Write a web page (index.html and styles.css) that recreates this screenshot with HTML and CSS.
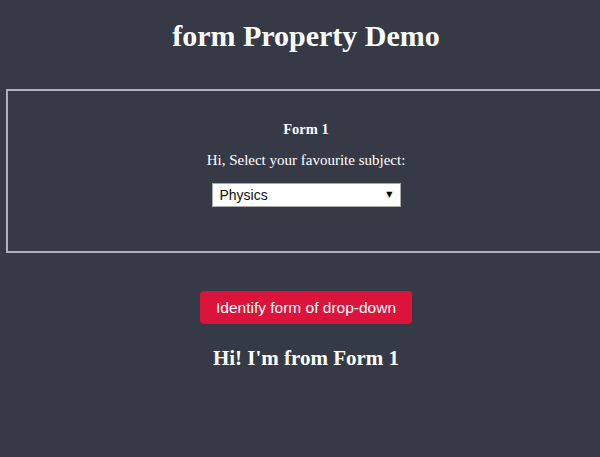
FILE: index.html
```html
<!DOCTYPE html>
<html>

<head>
	<title>form Property Demo</title>
	<meta charset="UTF-8">
	<meta name="viewport" content="width=device-width, initial-scale=1.0">
	<link rel="stylesheet" href="styles.css">
</head>

<body>
	<h1>form Property Demo</h1>
	<form id="form1" class="box">
		<p class="form-title">Form 1</p>
		<label for="subject">Hi, Select your favourite subject:</label>
		<span class="select-wrap">
			<select id="subject">
				<option>Physics</option>
				<option>Chemistry</option>
				<option>Maths</option>
			</select>
		</span>
	</form>
	<button class="btn" onclick="showForm()">Identify form of drop-down</button>
	<h2 id="result">Hi! I'm from Form 1</h2>
	<script>
		function showForm() {
			const sel = document.getElementById('subject');
			document.getElementById('result').textContent = "Hi! I'm from " + sel.form.id.replace('form', 'Form ');
		}
	</script>
</body>

</html>
```

FILE: styles.css
```css
* {
	box-sizing: border-box;
}

html {
	overflow: hidden;
}

body {
	margin: 0;
	padding: 0;
	width: 612px;
	background-color: #363a47;
	color: #fff;
	font-family: "Liberation Serif", serif;
	text-align: center;
}

h1 {
	margin: 0;
	padding-top: 19px;
	font-size: 30px;
	line-height: 34px;
}

.box {
	display: flex;
	flex-direction: column;
	align-items: center;
	margin: 36px 0 0 6px;
	width: 600px;
	height: 164px;
	border: 2px solid #aeb1b9;
	padding-top: 30px;
}

.form-title {
	margin: 0;
	font-weight: bold;
	font-size: 14.5px;
	line-height: 17px;
}

label {
	margin-top: 14px;
	font-size: 15px;
	line-height: 17px;
}

.select-wrap {
	position: relative;
	margin-top: 14px;
}

/* small filled arrow on the right of the drop-down */
.select-wrap::after {
	content: "\25BC";
	position: absolute;
	right: 8px;
	top: 7px;
	font-family: "DejaVu Sans", sans-serif;
	font-size: 8px;
	color: #000;
	pointer-events: none;
}

select {
	display: block;
	appearance: none;
	-webkit-appearance: none;
	width: 189px;
	height: 24px;
	padding: 0 7px;
	border: 1px solid #a9a9a9;
	border-radius: 0;
	background-color: #fff;
	font-family: "Liberation Sans", Arial, sans-serif;
	font-size: 14px;
	color: #111;
}

.btn {
	display: block;
	margin: 38px auto 0;
	width: 212px;
	height: 33px;
	border: none;
	border-radius: 4px;
	background-color: #dc143c;
	color: #fff;
	font-family: "Liberation Sans", Arial, sans-serif;
	font-size: 15.5px;
}

h2 {
	margin: 22px 0 0;
	font-size: 21px;
	line-height: 24px;
}
```
